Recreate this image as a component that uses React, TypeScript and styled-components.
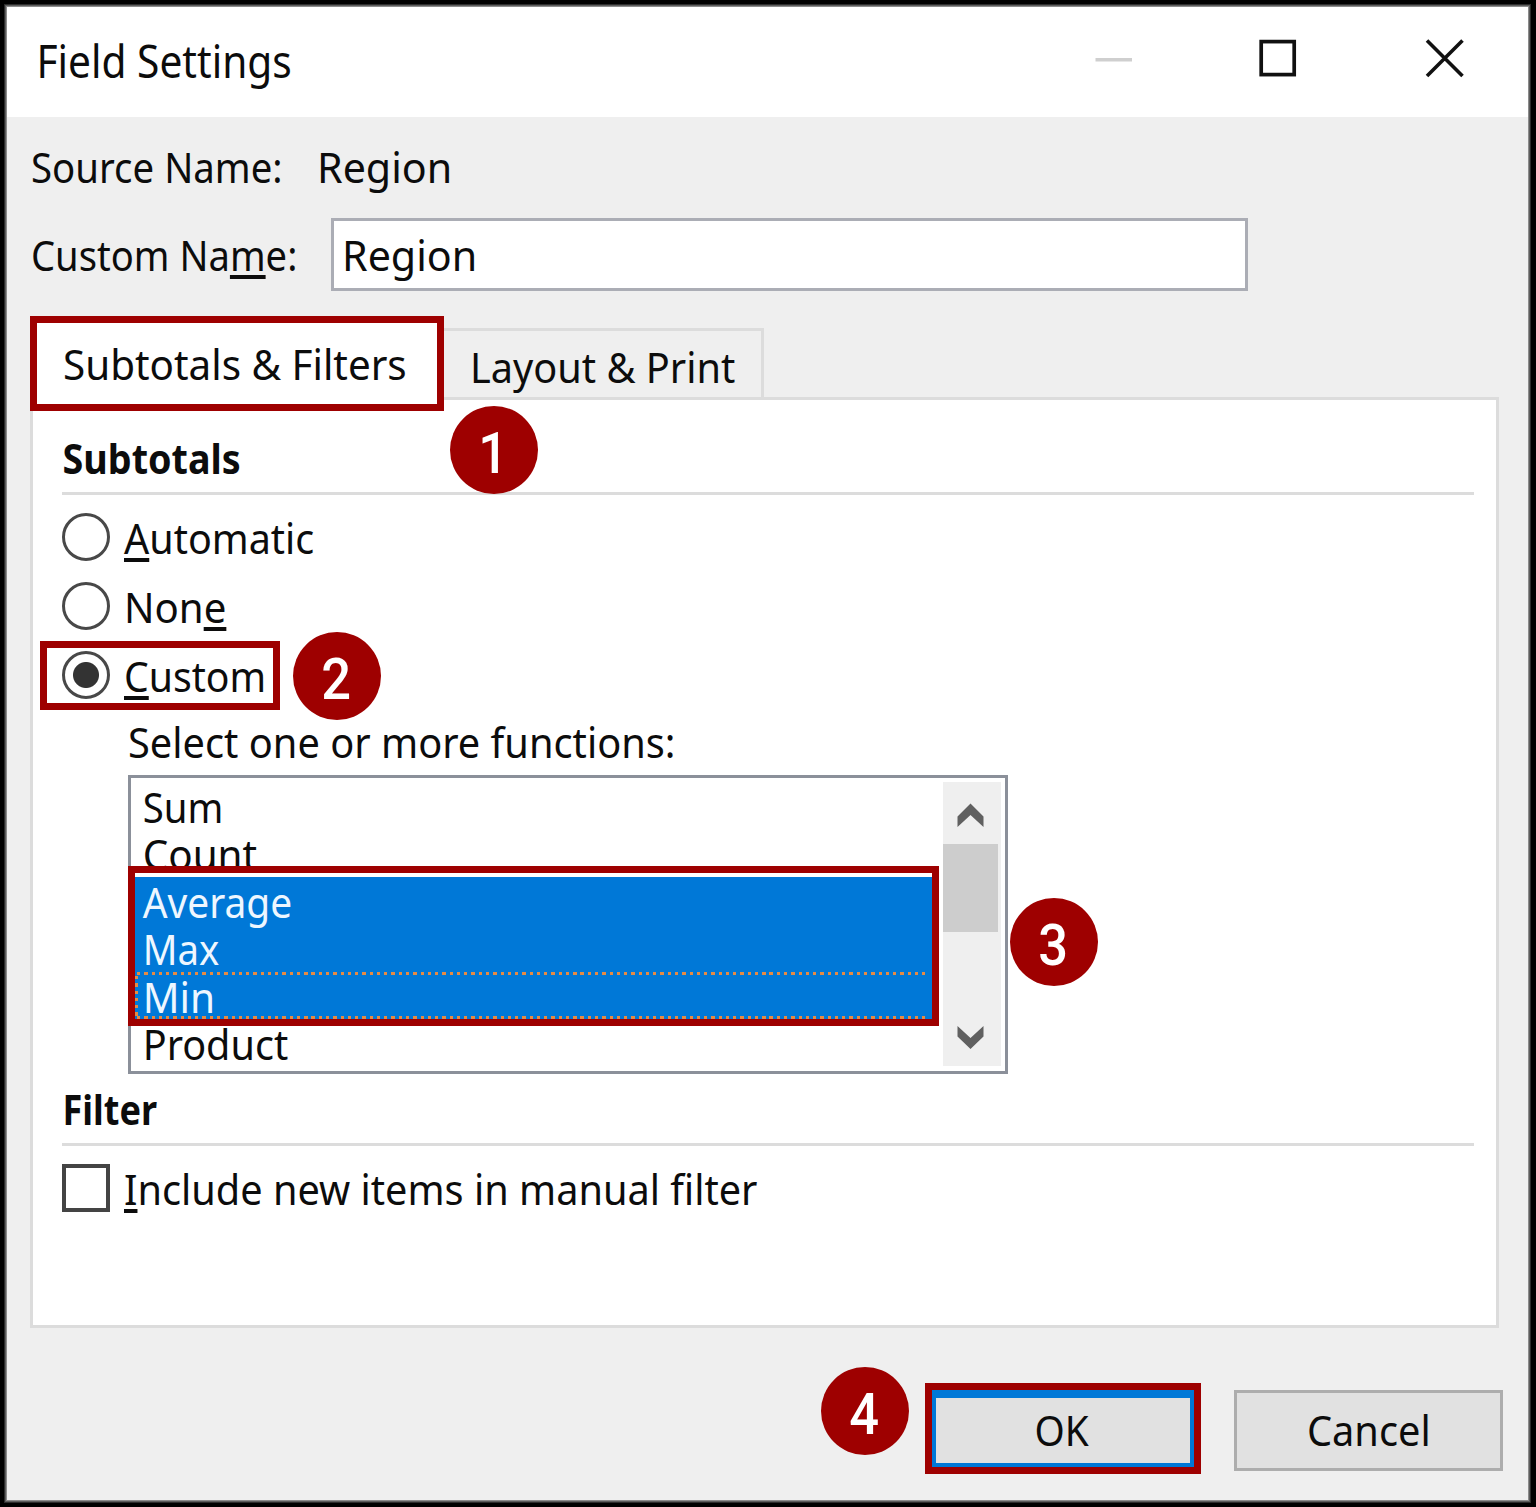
import React, { useState } from "react";
import styled, { createGlobalStyle, css } from "styled-components";

const RED = "#9e0000";
const BLUE = "#0078d7";
const LINE = "#dcdcdc";

const GlobalStyle = createGlobalStyle`
  * { box-sizing: border-box; }
  body { margin: 0; background: #000; }
`;

const Desktop = styled.div`
  width: 1536px;
  height: 1507px;
  padding: 7px 8px 7px 7px;
  background: #000;
  font-family: "Noto Sans", "Open Sans", sans-serif;
  font-size: 41px;
  line-height: 50px;
  color: #0c0c0c;
  overflow: hidden;
`;

const Window = styled.section`
  display: flex;
  flex-direction: column;
  width: 1521px;
  height: 1493px;
  background: #efefef;
  box-shadow: 0 0 0 1px #8c8c8c, 0 0 0 2px #5c5c5c, 0 0 0 3px #2c2c2c;
`;

const Text = styled.span<{ $fit?: number; $x?: number; $y?: number }>`
  display: inline-block;
  white-space: pre;
  transform-origin: left center;
  transform: translate(${(p) => p.$x ?? 0}px, ${(p) => p.$y ?? 0}px) scaleX(${(p) => p.$fit ?? 1});
`;

const Mnemonic = styled.span`
  text-decoration: underline;
  text-decoration-thickness: 4px;
  text-underline-offset: 4px;
  text-decoration-skip-ink: none;
`;

const TitleBar = styled.header`
  display: flex;
  align-items: center;
  height: 110px;
  padding-left: 28px;
  background: #fff;
`;

const Title = styled.h1`
  flex: 1;
  margin: 0;
  font-size: 46px;
  font-weight: 400;
  line-height: 60px;
`;

const WindowControl = styled.button<{ $width: number }>`
  display: flex;
  align-items: center;
  justify-content: center;
  width: ${(p) => p.$width}px;
  height: 110px;
  padding: 0;
  border: 0;
  background: transparent;
`;

const Body = styled.main`
  padding: 24px 0 0 23px;
`;

const FieldRow = styled.div<{ $height: number; $top?: number }>`
  display: grid;
  align-items: center;
  height: ${(p) => p.$height}px;
  margin-top: ${(p) => p.$top ?? 0}px;
`;

const SourceRow = styled(FieldRow)`
  grid-template-columns: 286px 1fr;
`;

const CustomRow = styled(FieldRow)`
  grid-template-columns: 301px 917px;
`;

const NameField = styled.div`
  display: flex;
  align-items: center;
  height: 73px;
  padding-left: 7px;
  border: 3px solid #abadb5;
  background: #fff;
`;

const TabStrip = styled.div`
  display: flex;
  align-items: flex-start;
  height: 81px;
  margin-top: 25px;
`;

const ActiveTab = styled.button`
  position: relative;
  z-index: 1;
  width: 414px;
  height: 95px;
  padding: 0 0 0 25px;
  border: 7px solid ${RED};
  background: #fff;
  font: inherit;
  color: inherit;
  text-align: left;
`;

const Tab = styled.button`
  width: 320px;
  height: 69px;
  margin-top: 12px;
  padding: 8px 0 2px 24px;
  border: solid ${LINE};
  border-width: 3px 3px 0 0;
  background: transparent;
  font: inherit;
  color: inherit;
  text-align: left;
`;

const Panel = styled.div`
  width: 1469px;
  height: 931px;
  padding: 32px 22px 0 29px;
  border: 3px solid ${LINE};
  background: #fff;
  position: relative;
`;

const SectionHeading = styled.h2<{ $top?: number }>`
  margin: ${(p) => p.$top ?? 0}px 0 0;
  padding-bottom: 10px;
  border-bottom: 3px solid ${LINE};
  font-size: 41px;
  font-weight: 700;
  line-height: 50px;
`;

const RadioGroup = styled.div`
  display: flex;
  flex-direction: column;
  align-items: flex-start;
  margin-top: 7px;
`;

const Option = styled.label<{ $height: number; $top?: number }>`
  position: relative;
  display: flex;
  align-items: center;
  gap: 14px;
  height: ${(p) => p.$height}px;
  margin-top: ${(p) => p.$top ?? 0}px;
`;

const RadioMark = styled.span<{ $checked: boolean }>`
  width: 48px;
  height: 48px;
  border: 3.5px solid #484848;
  border-radius: 50%;
  background: ${(p) => (p.$checked ? "radial-gradient(circle, #333 12.5px, #fff 13.5px)" : "#fff")};
`;

const CheckMark = styled.span`
  width: 48px;
  height: 48px;
  border: 4px solid #444;
  background: #fff;
`;

const Callout = styled.span<{ $x: number; $y: number; $w: number; $h: number }>`
  position: absolute;
  left: ${(p) => p.$x}px;
  top: ${(p) => p.$y}px;
  width: ${(p) => p.$w}px;
  height: ${(p) => p.$h}px;
  border: 7px solid ${RED};
  pointer-events: none;
`;

const Disc = styled.span<{ $x: number; $y: number }>`
  position: absolute;
  left: ${(p) => p.$x}px;
  top: ${(p) => p.$y}px;
  display: flex;
  align-items: center;
  justify-content: center;
  width: 88px;
  height: 88px;
  padding-top: 8px;
  border-radius: 50%;
  background: ${RED};
  color: #fff;
  font: 500 57px/60px Roboto, "Liberation Sans", sans-serif;
`;

const Digit = styled.span`
  transform: translateX(-1px) scaleX(0.92);
`;

const FunctionsLabel = styled.div`
  margin: 7px 0 0 66px;
`;

const ListBox = styled.div`
  position: relative;
  display: flex;
  justify-content: space-between;
  width: 880px;
  height: 299px;
  margin: 9px 0 0 66px;
  padding: 4px 3px 4px 3px;
  border: 3px solid #8b909a;
  background: #fff;
`;

const ListItems = styled.ul`
  width: 798px;
  margin: 0;
  padding: 0;
  list-style: none;
  line-height: 47.4px;
`;

const ListItem = styled.li<{ $selected: boolean; $focused: boolean }>`
  height: 47.4px;
  padding-left: 8px;
  ${(p) =>
    p.$selected &&
    css`
      background-color: ${BLUE};
      color: #eef7ff;
    `}
  ${(p) =>
    p.$focused &&
    css`
      background-image: repeating-linear-gradient(90deg, #e58b45 0 3.3px, transparent 3.3px 7.27px),
        repeating-linear-gradient(90deg, #e58b45 0 3.3px, transparent 3.3px 7.27px),
        repeating-linear-gradient(180deg, #e58b45 0 3.3px, transparent 3.3px 7.27px);
      background-size: 792px 3px, 792px 3px, 3px 40px;
      background-position: 3px 0, 3px 44px, 1px 4px;
      background-repeat: no-repeat;
    `}
`;

const ScrollBar = styled.div`
  display: flex;
  flex-direction: column;
  width: 58px;
  height: 284px;
  margin-right: 1px;
  background: #efefef;
`;

const ScrollThumb = styled.div`
  width: 55px;
  height: 88px;
  margin-bottom: 72px;
  background: #cdcdcd;
`;

const Footer = styled.footer`
  position: relative;
  display: flex;
  justify-content: flex-end;
  gap: 33px;
  padding: 55px 25px 0 0;
`;

const DefaultFrame = styled.div`
  width: 276px;
  height: 91px;
  border: 7px solid ${RED};
`;

const OkButton = styled.button`
  width: 100%;
  height: 100%;
  padding: 0;
  border: solid ${BLUE};
  border-width: 8px 4px 4px;
  background: #e1e1e1;
  font: inherit;
  color: inherit;
`;

const CancelButton = styled.button`
  width: 269px;
  height: 81px;
  margin-top: 7px;
  padding: 0;
  border: 3px solid #adadad;
  background: #e1e1e1;
  font: inherit;
  color: inherit;
`;

const Centered = styled(Text)`
  transform-origin: center;
`;

function StepBadge({ x, y, step }: { x: number; y: number; step: number }) {
  return (
    <Disc $x={x} $y={y}>
      <Digit>{step}</Digit>
    </Disc>
  );
}

const functions = [
  { name: "Sum", fit: 0.935 },
  { name: "Count", fit: 0.985 },
  { name: "Average", fit: 0.948 },
  { name: "Max", fit: 0.935 },
  { name: "Min", fit: 0.99 },
  { name: "Product", fit: 0.965 },
];

const options = [
  { id: "automatic", fit: 0.963, label: <><Mnemonic>A</Mnemonic>utomatic</> },
  { id: "none", fit: 0.98, label: <>Non<Mnemonic>e</Mnemonic></> },
  { id: "custom", fit: 0.955, label: <><Mnemonic>C</Mnemonic>ustom</> },
];

const selected = ["Average", "Max", "Min"];

export default function App() {
  const [choice, setChoice] = useState("custom");

  return (
    <>
      <GlobalStyle />
      <Desktop>
        <Window>
          <TitleBar>
            <Title>
              <Text $fit={0.884} $x={1.5} $y={-2}>Field Settings</Text>
            </Title>
            <WindowControl $width={164} aria-label="Minimize">
              <svg width="38" height="38" viewBox="0 0 38 38">
                <path d="M0.5 16.8H37" stroke="#cfcfcf" strokeWidth="3.6" />
              </svg>
            </WindowControl>
            <WindowControl $width={164} aria-label="Maximize">
              <svg width="38" height="46" viewBox="0 0 38 46">
                <rect x="2.2" y="2.6" width="33" height="33" fill="none" stroke="#111" strokeWidth="3.7" />
              </svg>
            </WindowControl>
            <WindowControl $width={168} aria-label="Close">
              <svg width="40" height="46" viewBox="0 0 40 46">
                <path d="M3 1.6L38.5 37M38.5 1.6L3 37" stroke="#111" strokeWidth="3.6" />
              </svg>
            </WindowControl>
          </TitleBar>
          <Body>
            <SourceRow $height={50}>
              <Text $fit={0.936} $x={1} $y={1}>Source Name:</Text>
              <Text $fit={1.005} $x={1} $y={1}>Region</Text>
            </SourceRow>
            <CustomRow $height={73} $top={27}>
              <Text $fit={0.931} $x={1}>Custom Na<Mnemonic>m</Mnemonic>e:</Text>
              <NameField>
                <Text $fit={1.005} $x={1}>Region</Text>
              </NameField>
            </CustomRow>
            <TabStrip>
              <ActiveTab>
                <Text $fit={0.985} $x={1}>Subtotals &amp; Filters</Text>
              </ActiveTab>
              <Tab>
                <Text $fit={0.968} $x={2}>Layout &amp; Print</Text>
              </Tab>
            </TabStrip>
            <Panel>
              <SectionHeading>
                <Text $fit={0.92} $x={0.5} $y={1}>Subtotals</Text>
              </SectionHeading>
              <RadioGroup>
                {options.map((o) => (
                  <Option key={o.id} $height={69} onClick={() => setChoice(o.id)}>
                    <RadioMark $checked={choice === o.id} />
                    <Text $fit={o.fit} $y={1}>{o.label}</Text>
                    {o.id === "custom" && (
                      <>
                        <Callout $x={-22} $y={1} $w={240} $h={69} />
                        <StepBadge x={231} y={-8} step={2} />
                      </>
                    )}
                  </Option>
                ))}
              </RadioGroup>
              <FunctionsLabel>
                <Text $fit={0.97} $y={1}>Select one or more functions:</Text>
              </FunctionsLabel>
              <ListBox>
                <ListItems>
                  {functions.map((f) => (
                    <ListItem key={f.name} $selected={selected.includes(f.name)} $focused={f.name === "Min"}>
                      <Text $fit={f.fit} $x={0.7} $y={2}>{f.name}</Text>
                    </ListItem>
                  ))}
                </ListItems>
                <ScrollBar>
                  <svg width="58" height="62" viewBox="0 0 58 62">
                    <path d="M27.5 21.5L40.5 34.5V45L27.5 33L14.5 45V34.5Z" fill="#606060" />
                  </svg>
                  <ScrollThumb />
                  <svg width="58" height="62" viewBox="0 0 58 62">
                    <path d="M27.5 45L40.5 32.5V22L27.5 34L14.5 22V32.5Z" fill="#606060" />
                  </svg>
                </ScrollBar>
                <Callout $x={-3} $y={88} $w={811} $h={160} />
                <StepBadge x={879} y={120} step={3} />
              </ListBox>
              <SectionHeading $top={9}>
                <Text $fit={0.88} $x={0.5} $y={1}>Filter</Text>
              </SectionHeading>
              <Option $height={48} $top={18}>
                <CheckMark />
                <Text $fit={0.968} $y={1}><Mnemonic>I</Mnemonic>nclude new items in manual filter</Text>
              </Option>
              <StepBadge x={417} y={6} step={1} />
            </Panel>
            <Footer>
              <StepBadge x={791} y={39} step={4} />
              <DefaultFrame>
                <OkButton>
                  <Centered $fit={0.945} $x={-1} $y={-1}>OK</Centered>
                </OkButton>
              </DefaultFrame>
              <CancelButton>
                <Centered $fit={0.97} $y={-1}>Cancel</Centered>
              </CancelButton>
            </Footer>
          </Body>
        </Window>
      </Desktop>
    </>
  );
}
